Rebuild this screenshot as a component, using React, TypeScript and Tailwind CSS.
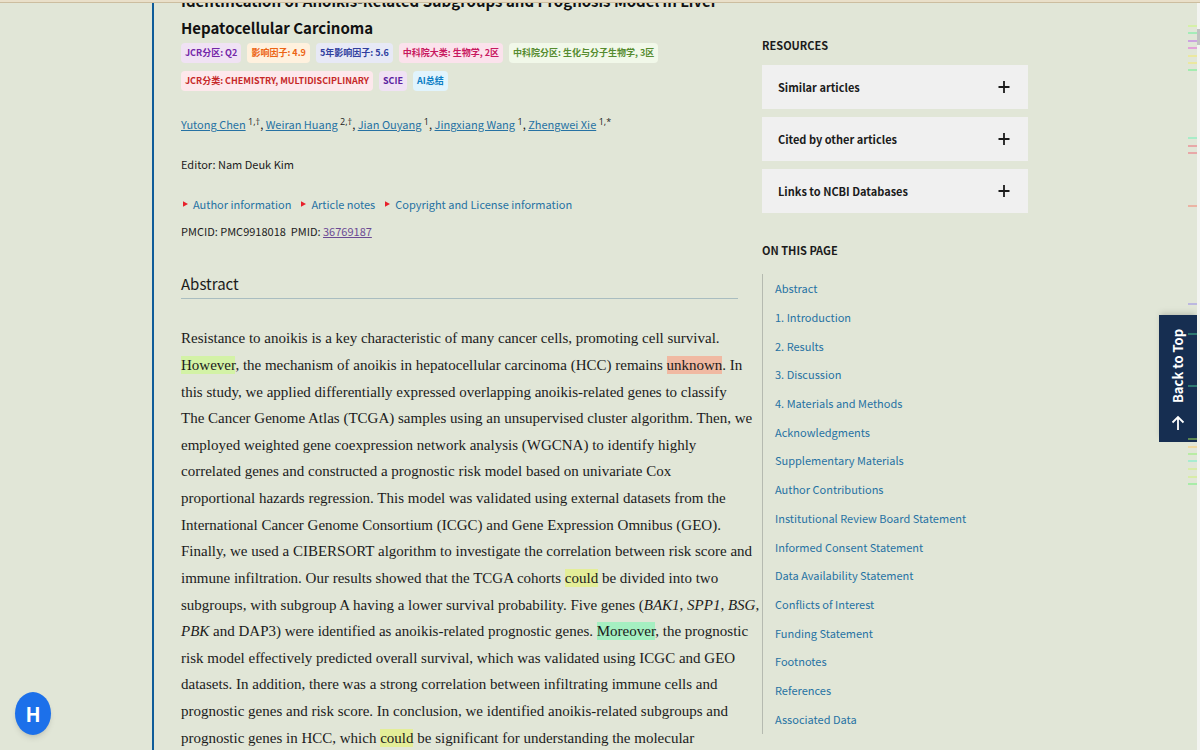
import type { ReactNode } from 'react';
import { clsx } from 'clsx';

const badgeRows = [
  [
    { text: 'JCR分区: Q2', color: 'bg-[#f0e2f4] text-[#7326a8]' },
    { text: '影响因子: 4.9', color: 'bg-[#fff1de] text-[#ec6414]' },
    { text: '5年影响因子: 5.6', color: 'bg-[#e7e9f6] text-[#303f9f]' },
    { text: '中科院大类: 生物学, 2区', color: 'bg-[#fbe2ec] text-[#c81860]' },
    { text: '中科院分区: 生化与分子生物学, 3区', color: 'bg-[#f1f8e9] text-[#558b2f]' },
  ],
  [
    { text: 'JCR分类: CHEMISTRY, MULTIDISCIPLINARY', color: 'bg-[#fde8ec] text-[#c62828]' },
    { text: 'SCIE', color: 'bg-[#f0e2f4] text-[#5b1fa0]' },
    { text: 'AI总结', color: 'bg-[#e1f4fd] text-[#0a7dc4]' },
  ],
];

const authors = [
  { name: 'Yutong Chen', note: '1,†' },
  { name: 'Weiran Huang', note: '2,†' },
  { name: 'Jian Ouyang', note: '1' },
  { name: 'Jingxiang Wang', note: '1' },
  { name: 'Zhengwei Xie', note: '1,*' },
];

const infoLinks = ['Author information', 'Article notes', 'Copyright and License information'];

const resources = ['Similar articles', 'Cited by other articles', 'Links to NCBI Databases'];

const sections = [
  'Abstract',
  '1. Introduction',
  '2. Results',
  '3. Discussion',
  '4. Materials and Methods',
  'Acknowledgments',
  'Supplementary Materials',
  'Author Contributions',
  'Institutional Review Board Statement',
  'Informed Consent Statement',
  'Data Availability Statement',
  'Conflicts of Interest',
  'Funding Statement',
  'Footnotes',
  'References',
  'Associated Data',
];

// highlight positions shown next to the scrollbar
const markers = [
  { top: 25, color: 'bg-[#d5f0a8]' },
  { top: 32, color: 'bg-[#a4ecb8]' },
  { top: 40, color: 'bg-[#cba4e0]' },
  { top: 47, color: 'bg-[#e2a4d8]' },
  { top: 55, color: 'bg-[#ebe8a0]' },
  { top: 62, color: 'bg-[#ebe8a0]' },
  { top: 69, color: 'bg-[#a4ecb0]' },
  { top: 137, color: 'bg-[#a8ecc8]' },
  { top: 145, color: 'bg-[#e8a8a8]' },
  { top: 152, color: 'bg-[#e8a8a8]' },
  { top: 205, color: 'bg-[#ebb4a4]' },
  { top: 303, color: 'bg-[#bcb8e0]' },
  { top: 333, color: 'bg-[#2c766f]' },
  { top: 385, color: 'bg-[#2c766f]' },
  { top: 438, color: 'bg-[#5c8552]' },
  { top: 446, color: 'bg-[#efd9a0]' },
  { top: 453, color: 'bg-[#b8eca4]' },
  { top: 460, color: 'bg-[#a8ecd0]' },
  { top: 468, color: 'bg-[#d8eca8]' },
  { top: 476, color: 'bg-[#d8eca8]' },
  { top: 483, color: 'bg-[#a8eca8]' },
];

function Mark({ color, children }: { color: string; children: ReactNode }) {
  return <mark className={clsx('py-px text-[#1b1b1b]', color)}>{children}</mark>;
}

const abstractLines: ReactNode[] = [
  'Resistance to anoikis is a key characteristic of many cancer cells, promoting cell survival.',
  <><Mark color="bg-[#d3f2a6]">However</Mark>, the mechanism of anoikis in hepatocellular carcinoma (HCC) remains <Mark color="bg-[#f0b9a2]">unknown</Mark>. In</>,
  'this study, we applied differentially expressed overlapping anoikis-related genes to classify',
  'The Cancer Genome Atlas (TCGA) samples using an unsupervised cluster algorithm. Then, we',
  'employed weighted gene coexpression network analysis (WGCNA) to identify highly',
  'correlated genes and constructed a prognostic risk model based on univariate Cox',
  'proportional hazards regression. This model was validated using external datasets from the',
  'International Cancer Genome Consortium (ICGC) and Gene Expression Omnibus (GEO).',
  'Finally, we used a CIBERSORT algorithm to investigate the correlation between risk score and',
  <>immune infiltration. Our results showed that the TCGA cohorts <Mark color="bg-[#e4ee98]">could</Mark> be divided into two</>,
  <>subgroups, with subgroup A having a lower survival probability. Five genes (<i>BAK1</i>, <i>SPP1</i>, <i>BSG</i>,</>,
  <><i>PBK</i> and DAP3) were identified as anoikis-related prognostic genes. <Mark color="bg-[#a5efc1]">Moreover</Mark>, the prognostic</>,
  'risk model effectively predicted overall survival, which was validated using ICGC and GEO',
  'datasets. In addition, there was a strong correlation between infiltrating immune cells and',
  'prognostic genes and risk score. In conclusion, we identified anoikis-related subgroups and',
  <>prognostic genes in HCC, which <Mark color="bg-[#e4ee98]">could</Mark> be significant for understanding the molecular</>,
];

function Article() {
  return (
    <article className="min-w-0 flex-1 whitespace-nowrap">
      <h1 className="-mt-[13px] text-[15px] leading-[27px] font-bold text-[#111]">
        Identification of Anoikis-Related Subgroups and Prognosis Model in Liver
        <br />
        Hepatocellular Carcinoma
      </h1>

      <div className="mt-[2px] flex flex-col gap-2">
        {badgeRows.map((row, i) => (
          <div key={i} className="flex gap-1.5">
            {row.map((badge) => (
              <span key={badge.text} className={clsx('rounded-sm px-1 text-[9px] leading-5 font-bold', badge.color)}>
                {badge.text}
              </span>
            ))}
          </div>
        ))}
      </div>

      <p className="mt-[23px] text-[11px] leading-5">
        {authors.map((author, i) => (
          <span key={author.name}>
            {i > 0 && ', '}
            <a href="#" className="text-[#2672a3] underline">{author.name}</a>{' '}
            <sup className="font-['Open_Sans',sans-serif] text-[9px]">{author.note}</sup>
          </span>
        ))}
      </p>

      <p className="mt-5 text-[11px] leading-5">Editor: Nam Deuk Kim</p>

      <div className="mt-5 flex gap-2 text-[11px] leading-5">
        {infoLinks.map((link) => (
          <a key={link} href="#" className="flex items-center gap-1 text-[#2672a3]">
            <svg viewBox="0 0 8 8" className="size-2 text-[#e8202a]" fill="currentColor">
              <path d="M2 1.200 7 4 2 6.800Z" />
            </svg>
            {link}
          </a>
        ))}
      </div>

      <p className="mt-[7px] text-[11px] leading-5">
        PMCID: PMC9918018 &nbsp;PMID: <a href="#" className="text-[#6b4a94] underline">36769187</a>
      </p>

      <h2 className="mt-[29px] border-b border-[#a9bdc0] text-[15px] leading-7">Abstract</h2>

      <p className="mt-[26px] grid h-[426px] auto-rows-fr items-center font-['Liberation_Serif',serif] text-[15px] leading-6">
        {abstractLines.map((line, i) => (
          <span key={i}>{line}</span>
        ))}
      </p>
    </article>
  );
}

function Sidebar() {
  return (
    <aside className="w-[266px] shrink-0 pt-[33px] text-[11px]">
      <h2 className="leading-6 font-bold">RESOURCES</h2>
      <div className="mt-2 flex flex-col gap-2">
        {resources.map((resource) => (
          <button key={resource} type="button" className="flex h-11 items-center justify-between bg-[#f0f0f0] px-4 font-bold">
            {resource}
            <svg viewBox="0 0 16 16" className="size-4" fill="none" stroke="currentColor" strokeWidth="1.8">
              <path d="M8 2v12M2.500 8h11" />
            </svg>
          </button>
        ))}
      </div>

      <h2 className="mt-[25px] leading-6 font-bold">ON THIS PAGE</h2>
      <nav className="mt-3">
        <ul className="grid h-[460px] auto-rows-fr items-center border-l border-[#b5bab0] pb-px pl-3">
          {sections.map((section) => (
            <li key={section} className="leading-5">
              <a href="#" className="text-[#2672a3]">{section}</a>
            </li>
          ))}
        </ul>
      </nav>
    </aside>
  );
}

export default function App() {
  return (
    <div className="relative h-screen overflow-hidden bg-[#e1e6d7] font-['Noto_Sans_CJK_SC',sans-serif] text-[#1b1b1b]">
      <div className="absolute inset-x-0 top-0 z-10 h-[3px] border-b border-[#ccbd9f] bg-[#e9dfc9]" />

      <div className="ml-[152px] mr-[172px] flex min-h-full gap-6 border-l-2 border-[#0f5c99] pl-[27px]">
        <Article />
        <Sidebar />
      </div>

      <button
        type="button"
        className="absolute right-[3px] top-[315px] flex h-[127px] w-[38px] rotate-180 items-center gap-3 bg-[#162e51] px-[11px] text-[13px] font-bold text-white shadow-md [writing-mode:vertical-rl]"
      >
        <svg viewBox="0 0 16 16" className="size-4 shrink-0" fill="none" stroke="currentColor" strokeWidth="1.8">
          <path d="M8 1v13M2.500 8.500 8 14l5.500-5.500" />
        </svg>
        Back to Top
      </button>

      {markers.map((marker) => (
        <span key={marker.top} className={clsx('absolute right-[3px] h-0.5 w-[9px]', marker.color)} style={{ top: marker.top }} />
      ))}

      <div className="absolute inset-y-0 right-0 w-[3px] bg-[#f3f4f1]">
        <div className="mt-[29px] h-4 bg-[#c1c3c2]" />
      </div>

      <button
        type="button"
        className="absolute bottom-[15px] left-[15px] flex h-[43px] w-9 items-center justify-center rounded-[50%] bg-[#1c70ea] text-xl font-bold text-white shadow-md"
      >
        H
      </button>
    </div>
  );
}
